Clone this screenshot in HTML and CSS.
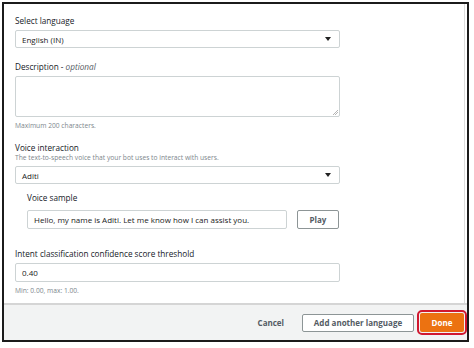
FILE: index.html
```html
<!DOCTYPE html>
<html>
<head>
<meta charset="utf-8">
<link rel="stylesheet" href="styles.css">
</head>
<body>
<div class="frame">
  <div class="content">
    <div class="field">
      <div class="label">Select language</div>
      <div class="select"><span>English (IN)</span><span class="caret"></span></div>
    </div>
    <div class="field gap-desc">
      <div class="label">Description - <i>optional</i></div>
      <div class="textarea"><span class="grip"></span></div>
      <div class="hint">Maximum 200 characters.</div>
    </div>
    <div class="field gap-voice">
      <div class="label">Voice interaction</div>
      <div class="hint desc">The text-to-speech voice that your bot uses to interact with users.</div>
      <div class="select"><span>Aditi</span><span class="caret"></span></div>
    </div>
    <div class="field sample">
      <div class="label">Voice sample</div>
      <div class="sample-row">
        <div class="input wide">Hello, my name is Aditi. Let me know how I can assist you.</div>
        <div class="btn play">Play</div>
      </div>
    </div>
    <div class="field gap-intent">
      <div class="label">Intent classification confidence score threshold</div>
      <div class="input full">0.40</div>
      <div class="hint">Min: 0.00, max: 1.00.</div>
    </div>
  </div>
  <div class="footer">
    <span class="cancel">Cancel</span>
    <div class="btn add">Add another language</div>
    <div class="btn done">Done</div>
  </div>
</div>
</body>
</html>
```

FILE: styles.css
```css
html, body { margin: 0; padding: 0; background: #fff; }
body { font-family: "Open Sans", "Liberation Sans", sans-serif; color: #16191f; }
.frame {
  margin: 2px 0 0 2px;
  width: 467px;
  height: 340px;
  box-sizing: border-box;
  border: 2px solid #1b1b1b;
  display: flex;
  flex-direction: column;
}
.content {
  flex: 1;
  margin-right: 2px;
  border-right: 1px solid #dcdcdc;
  padding: 11px 0 0 11px;
}
.label { font-size: 8.2px; line-height: 11px; margin-bottom: 4px; }
.label i { color: #545b64; }
.hint { font-size: 6.7px; line-height: 10px; color: #7d868c; }
.select {
  width: 325px; height: 18px; box-sizing: border-box;
  border: 1px solid #cdd3d4; border-radius: 2px;
  display: flex; align-items: center; justify-content: space-between;
  padding: 0 8px 0 6px; font-size: 8px; color: #222;
}
.caret {
  width: 0; height: 0;
  border-left: 3px solid transparent; border-right: 3px solid transparent;
  border-top: 4px solid #222;
}
.gap-desc { margin-top: 13px; }
.textarea {
  width: 325px; height: 41px; box-sizing: border-box;
  border: 1px solid #cdd3d4; border-radius: 2px; position: relative;
  margin-bottom: 4px;
}
.grip {
  position: absolute; right: 1px; bottom: 1px; width: 5px; height: 5px;
  background: linear-gradient(135deg, transparent 45%, #b5b5b5 45%, #b5b5b5 55%, transparent 55%, transparent 70%, #b5b5b5 70%, #b5b5b5 80%, transparent 80%);
}
.gap-voice { margin-top: 11px; }
.gap-voice .label { margin-bottom: 0; }
.desc { margin-bottom: 3px; }
.sample { margin-top: 8px; padding-left: 12px; }
.sample .label { margin-bottom: 7px; }
.sample-row { display: flex; gap: 10px; }
.input {
  height: 19px; box-sizing: border-box;
  border: 1px solid #cdd3d4; border-radius: 2px;
  display: flex; align-items: center; padding-left: 6px; font-size: 8px; color: #222;
}
.input.wide { width: 260px; }
.input.full { width: 325px; margin-bottom: 4px; }
.btn {
  height: 19px; box-sizing: border-box; border-radius: 2px;
  display: flex; align-items: center; justify-content: center;
  font-size: 8px; font-weight: 700; color: #545b64;
}
.play { width: 42px; border: 1px solid #8d9596; }
.gap-intent { margin-top: 19px; }
.footer {
  height: 37px; box-sizing: border-box;
  border-top: 2px solid #d5d5d5;
  background: #f2f3f3;
  display: flex; align-items: center; justify-content: flex-end;
  padding-right: 3px;
}
.cancel { font-size: 8px; font-weight: 700; color: #545b64; margin-right: 18px; }
.add { width: 112px; height: 18px; border: 1px solid #8d9596; background: #fff; margin-right: 6px; }
.done {
  width: 44px; height: 19px; background: #ec7211; color: #fff;
  outline: 2px solid #d01830; outline-offset: 1px;
}
```
